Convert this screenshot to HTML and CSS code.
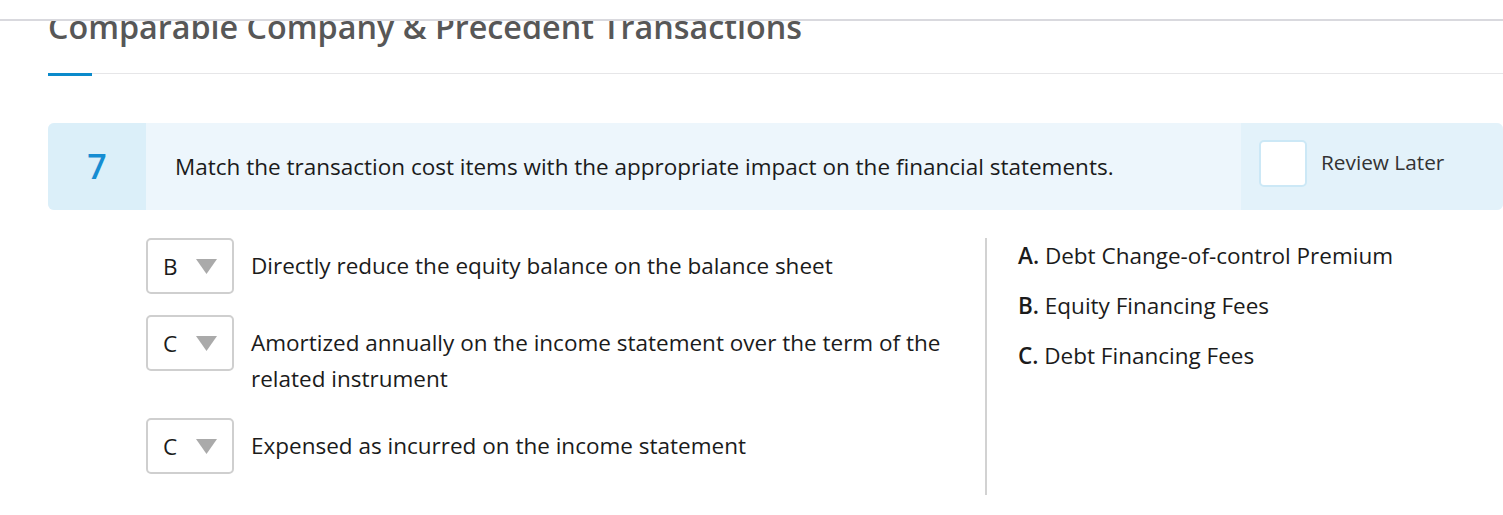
FILE: index.html
```html
<!DOCTYPE html>
<html lang="en">
<head>
<meta charset="utf-8">
<title>Question 7</title>
<link rel="stylesheet" href="styles.css">
</head>
<body>
<div class="topbar"></div>
<div class="viewport">
  <div class="content">
    <h1 class="title">Comparable Company &amp; Precedent Transactions</h1>
    <div class="tabline"><span class="accent"></span><span class="rule"></span></div>

    <div class="card">
      <div class="qnum">7</div>
      <div class="qtext">Match the transaction cost items with the appropriate impact on the financial statements.</div>
      <div class="review">
        <span class="checkbox"></span>
        <span class="review-label">Review Later</span>
      </div>
    </div>

    <div class="match">
      <div class="left">
        <div class="row">
          <div class="select"><span class="val">B</span><svg class="caret" width="21" height="15" viewBox="0 0 21 15"><polygon points="0,0 21,0 10.5,15" fill="#aaaaaa"/></svg></div>
          <div class="item">Directly reduce the equity balance on the balance sheet</div>
        </div>
        <div class="row">
          <div class="select"><span class="val">C</span><svg class="caret" width="21" height="15" viewBox="0 0 21 15"><polygon points="0,0 21,0 10.5,15" fill="#aaaaaa"/></svg></div>
          <div class="item">Amortized annually on the income statement over the term of the related instrument</div>
        </div>
        <div class="row">
          <div class="select"><span class="val">C</span><svg class="caret" width="21" height="15" viewBox="0 0 21 15"><polygon points="0,0 21,0 10.5,15" fill="#aaaaaa"/></svg></div>
          <div class="item">Expensed as incurred on the income statement</div>
        </div>
      </div>
      <div class="right">
        <div class="answer"><b>A.</b> Debt Change-of-control Premium</div>
        <div class="answer"><b>B.</b> Equity Financing Fees</div>
        <div class="answer"><b>C.</b> Debt Financing Fees</div>
      </div>
    </div>
  </div>
</div>
</body>
</html>
```

FILE: styles.css
```css
* { box-sizing: border-box; }
html, body { margin: 0; padding: 0; background: #ffffff; }
body {
  font-family: "Open Sans", "Noto Sans", sans-serif;
  color: #1b1b1b;
  overflow: hidden;
}
.topbar {
  height: 21px;
  border-bottom: 2px solid #d9d9de;
  background: #ffffff;
}
.viewport {
  height: 494px;
  overflow: hidden;
}
.content {
  margin-top: -15px;
  padding-left: 48px;
}
.title {
  margin: 0;
  font-size: 32.3px;
  line-height: 40px;
  font-weight: 600;
  color: #575757;
  white-space: nowrap;
}
.tabline {
  display: flex;
  align-items: flex-start;
  margin-top: 27px;
}
.accent {
  width: 44px;
  height: 3px;
  background: #0b8acb;
}
.rule {
  flex: 1;
  height: 1px;
  background: #e6e6e8;
}
.card {
  margin-top: 47px;
  display: flex;
  height: 87px;
  border-radius: 6px;
  overflow: hidden;
  background: #edf6fc;
}
.qnum {
  width: 98px;
  flex: none;
  background: #dbeff9;
  display: flex;
  align-items: center;
  justify-content: center;
  font-size: 34px;
  font-weight: 600;
  color: #168dd2;
  padding-bottom: 2px;
}
.qtext {
  flex: 1;
  display: flex;
  align-items: center;
  padding-left: 29px;
  font-size: 22.5px;
  color: #1b1b1b;
}
.review {
  width: 262px;
  flex: none;
  background: #e3f2fa;
  display: flex;
  align-items: center;
  padding-left: 18px;
  padding-bottom: 6px;
  gap: 14px;
}
.checkbox {
  width: 48px;
  height: 47px;
  background: #ffffff;
  border: 2px solid #cce8f6;
  border-radius: 5px;
}
.review-label {
  font-size: 20.8px;
  color: #333333;
  margin-bottom: 4px;
}
.match {
  display: flex;
  margin-top: 28px;
}
.left {
  width: 937px;
  padding-left: 98px;
}
.row {
  display: flex;
  align-items: flex-start;
  margin-bottom: 21px;
}
.select {
  width: 88px;
  height: 56px;
  flex: none;
  border: 2px solid #cfcfcf;
  border-radius: 5px;
  display: flex;
  align-items: center;
  justify-content: space-between;
  padding: 0 15px;
  font-size: 22.5px;
  color: #1b1b1b;
}
.caret { display: block; }
.item {
  padding-left: 17px;
  padding-top: 10px;
  font-size: 22.5px;
  line-height: 36px;
  width: 720px;
}
.right {
  border-left: 2px solid #d2d2d2;
  padding-left: 31px;
}
.answer {
  font-size: 22.5px;
  line-height: 36px;
  margin-bottom: 14px;
}
.answer b { font-weight: 600; }
```
